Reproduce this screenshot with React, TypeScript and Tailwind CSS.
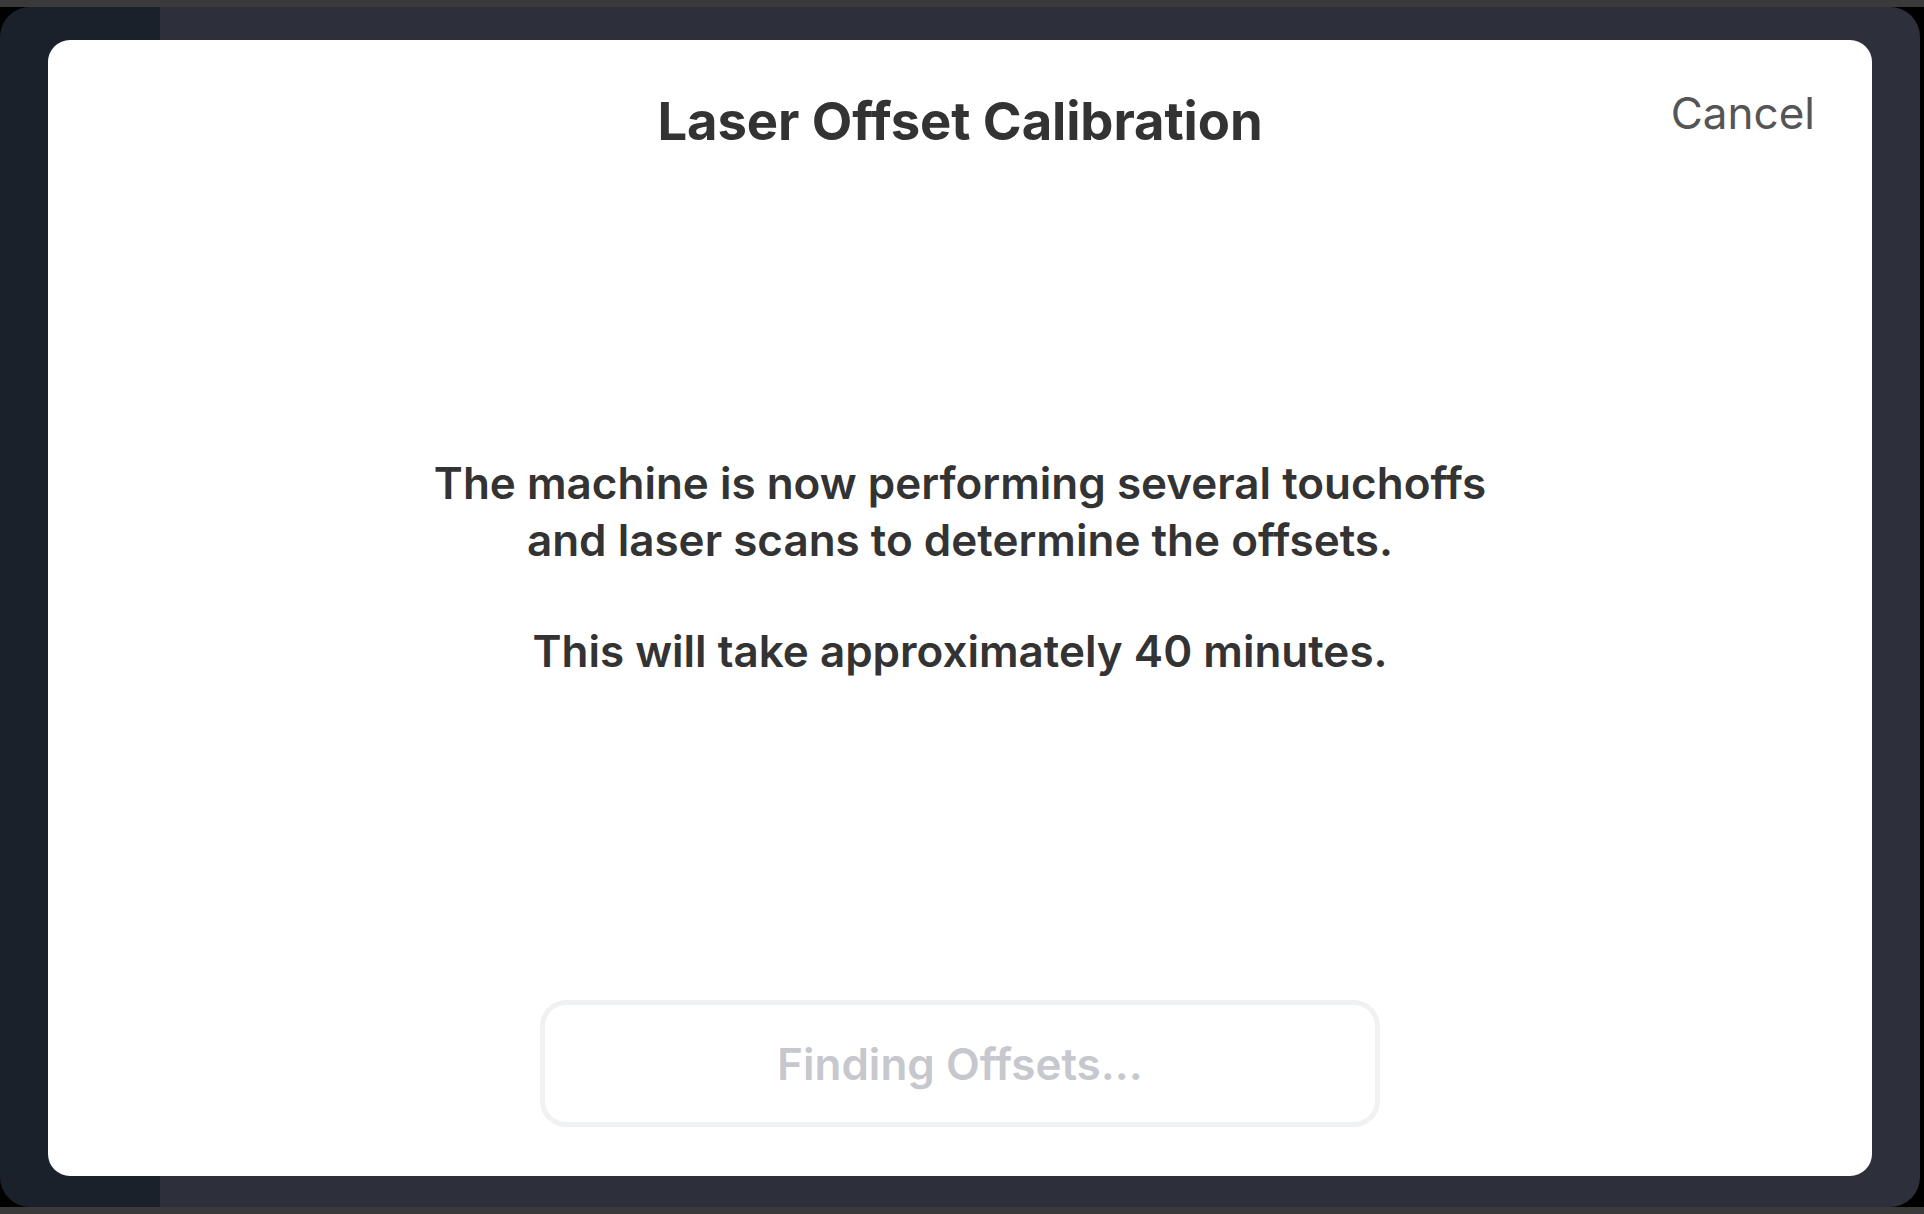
import React from "react";

export default function App() {
  return (
    <div
      className="relative w-[1924px] h-[1214px] flex flex-col bg-black overflow-hidden"
      style={{ fontFamily: "Inter, 'Noto Sans', sans-serif" }}
    >
      <div className="h-[7px] bg-[#3a3a3a] shrink-0" />
      <div className="flex-1 flex bg-black">
        <div className="w-[1920px] h-full flex rounded-[30px] overflow-hidden">
          <div className="w-[160px] h-full bg-[#1b212b]" />
          <div className="flex-1 h-full bg-[#2d303a]" />
        </div>
      </div>
      <div className="h-[7px] bg-[#3a3a3a] shrink-0" />

      <div className="absolute left-[48px] top-[40px] w-[1824px] h-[1136px] bg-white rounded-[22px] flex flex-col items-center">
        <div className="w-full grid grid-cols-[1fr_auto_1fr] pl-[57px] pr-[57px]">
          <div />
          <h1 className="mt-[50px] text-[52.6px] leading-[62px] font-bold text-[#333333] tracking-[-0.1px]">
            Laser Offset Calibration
          </h1>
          <div className="flex justify-end">
            <button className="mt-[34px] text-[44px] leading-[53px] font-normal text-[#555555]">
              Cancel
            </button>
          </div>
        </div>

        <div className="mt-[303px] text-center text-[44px] leading-[57px] font-semibold text-[#333333]">
          <p>The machine is now performing several touchoffs</p>
          <p>and laser scans to determine the offsets.</p>
          <p className="mt-[54px]">This will take approximately 40 minutes.</p>
        </div>

        <div className="mt-auto mb-[49px]">
          <button
            disabled
            className="w-[840px] h-[127px] rounded-[26px] border-[5px] border-[#f0f1f3] bg-white text-[44px] font-semibold text-[#c6c8cd] flex items-center justify-center"
          >
            Finding Offsets...
          </button>
        </div>
      </div>
    </div>
  );
}
